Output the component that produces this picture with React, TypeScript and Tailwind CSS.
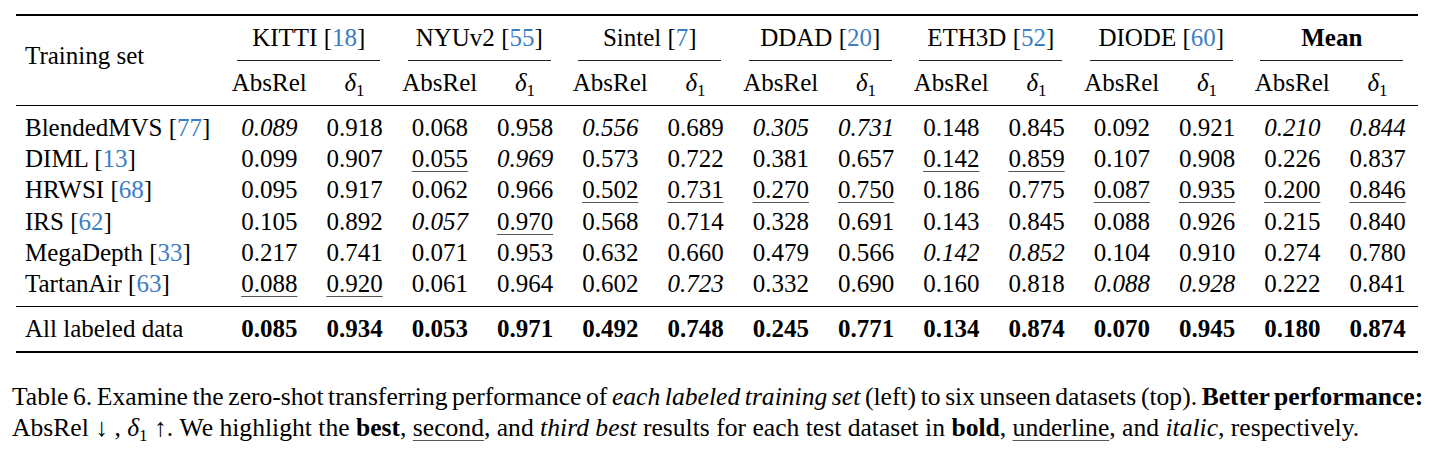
import React from "react";

type Cell = { v: string; s?: "i" | "u" | "b" };

const cite = (n: string) => (
  <>
    {" "}[<span className="text-[#3b7ec4]">{n}</span>]
  </>
);

const parse = (s: string): Cell => {
  if (s.endsWith("i")) return { v: s.slice(0, -1), s: "i" };
  if (s.endsWith("u")) return { v: s.slice(0, -1), s: "u" };
  return { v: s };
};

const rows: { name: string; ref: string; vals: string[] }[] = [
  { name: "BlendedMVS", ref: "77", vals: ["0.089i", "0.918", "0.068", "0.958", "0.556i", "0.689", "0.305i", "0.731i", "0.148", "0.845", "0.092", "0.921", "0.210i", "0.844i"] },
  { name: "DIML", ref: "13", vals: ["0.099", "0.907", "0.055u", "0.969i", "0.573", "0.722", "0.381", "0.657", "0.142u", "0.859u", "0.107", "0.908", "0.226", "0.837"] },
  { name: "HRWSI", ref: "68", vals: ["0.095", "0.917", "0.062", "0.966", "0.502u", "0.731u", "0.270u", "0.750u", "0.186", "0.775", "0.087u", "0.935u", "0.200u", "0.846u"] },
  { name: "IRS", ref: "62", vals: ["0.105", "0.892", "0.057i", "0.970u", "0.568", "0.714", "0.328", "0.691", "0.143", "0.845", "0.088", "0.926", "0.215", "0.840"] },
  { name: "MegaDepth", ref: "33", vals: ["0.217", "0.741", "0.071", "0.953", "0.632", "0.660", "0.479", "0.566", "0.142i", "0.852i", "0.104", "0.910", "0.274", "0.780"] },
  { name: "TartanAir", ref: "63", vals: ["0.088u", "0.920u", "0.061", "0.964", "0.602", "0.723i", "0.332", "0.690", "0.160", "0.818", "0.088i", "0.928i", "0.222", "0.841"] },
];

const allRow = ["0.085", "0.934", "0.053", "0.971", "0.492", "0.748", "0.245", "0.771", "0.134", "0.874", "0.070", "0.945", "0.180", "0.874"];

const groups: { name: string; ref?: string; bold?: boolean }[] = [
  { name: "KITTI", ref: "18" },
  { name: "NYUv2", ref: "55" },
  { name: "Sintel", ref: "7" },
  { name: "DDAD", ref: "20" },
  { name: "ETH3D", ref: "52" },
  { name: "DIODE", ref: "60" },
  { name: "Mean", bold: true },
];

const GRID = "grid grid-cols-[206px_repeat(7,94.5px_76px)]";

const Delta = () => (
  <span>
    <span className="italic">δ</span>
    <span className="text-[17px] align-[-5px]">1</span>
  </span>
);

const Num = ({ c }: { c: Cell }) => {
  if (c.s === "i") return <span className="italic">{c.v}</span>;
  if (c.s === "u")
    return (
      <span className="underline decoration-[#555] decoration-1 underline-offset-[4px]">{c.v}</span>
    );
  if (c.s === "b") return <span className="font-bold">{c.v}</span>;
  return <span>{c.v}</span>;
};

export default function App() {
  return (
    <div className="w-[1440px] h-[452px] bg-white text-black overflow-hidden font-['Liberation_Serif','DejaVu_Serif',serif]">
      <div className="pt-[14px] pl-[16px]">
        <div className="w-[1402px] text-[25px]">
          <div className="h-[2px] bg-black" />
          {/* header */}
          <div className={`${GRID} grid-rows-[45px_43.5px]`}>
            <div className="row-span-2 pl-[9px] pt-[25px] leading-[30px]">Training set</div>
            {groups.map((g) => (
              <div key={g.name} className="col-span-2 flex flex-col">
                <div className="h-[44px] leading-[44px] text-center pl-[3px]">
                  {g.bold ? <span className="font-bold">{g.name}</span> : g.name}
                  {g.ref && cite(g.ref)}
                </div>
                <div className="h-[1px] bg-[#222] ml-[15px] mr-[12.5px]" />
              </div>
            ))}
            {groups.map((g) => (
              <React.Fragment key={g.name + "sub"}>
                <div className="leading-[43.5px] text-center">AbsRel</div>
                <div className="leading-[43.5px] text-center">
                  <Delta />
                </div>
              </React.Fragment>
            ))}
          </div>
          <div className="h-[1.5px] bg-black" />
          {/* body */}
          <div className="py-[5.75px]">
            {rows.map((r) => (
              <div key={r.name} className={`${GRID} h-[31.35px] leading-[31.35px]`}>
                <div className="pl-[9px] whitespace-nowrap">
                  {r.name}
                  {cite(r.ref)}
                </div>
                {r.vals.map((v, i) => (
                  <div key={i} className="text-center">
                    <Num c={parse(v)} />
                  </div>
                ))}
              </div>
            ))}
          </div>
          <div className="h-[1.5px] bg-black" />
          <div className={`${GRID} h-[44px] leading-[44px]`}>
            <div className="pl-[9px] whitespace-nowrap">All labeled data</div>
            {allRow.map((v, i) => (
              <div key={i} className="text-center font-bold">
                {v}
              </div>
            ))}
          </div>
          <div className="h-[2px] bg-black" />
        </div>
      </div>
      <div className="pl-[12px] mt-[28px] text-[25.6px] leading-[31px] whitespace-nowrap">
        <div className="[word-spacing:-1.8px]">
          Table 6. Examine the zero-shot transferring performance of{" "}
          <span className="italic">each labeled training set</span> (left) to six unseen datasets (top).{" "}
          <span className="font-bold">Better performance:</span>
        </div>
        <div>
          AbsRel {"\u2193\uFE0E"} , <span className="italic">δ</span>
          <span className="text-[17px] align-[-5px]">1</span> {"\u2191\uFE0E"}. We highlight the{" "}
          <span className="font-bold">best</span>,{" "}
          <span className="underline decoration-[#555] decoration-1 underline-offset-[4px]">second</span>, and{" "}
          <span className="italic">third best</span> results for each test dataset in{" "}
          <span className="font-bold">bold</span>,{" "}
          <span className="underline decoration-[#555] decoration-1 underline-offset-[4px]">underline</span>, and{" "}
          <span className="italic">italic</span>, respectively.
        </div>
      </div>
    </div>
  );
}
